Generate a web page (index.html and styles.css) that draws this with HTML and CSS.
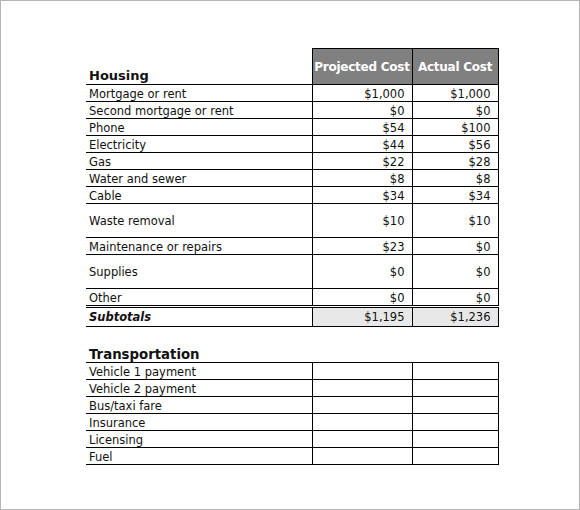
FILE: index.html
```html
<!DOCTYPE html>
<html lang="en">
  <head>
    <meta charset="UTF-8" />
    <title>Household Budget</title>
    <link rel="stylesheet" href="styles.css">
  </head>
  <body>
    <div class="sheet">
      <table class="budget">
        <colgroup>
          <col class="c-item" />
          <col class="c-cost" />
          <col class="c-actual" />
        </colgroup>
        <tr class="head">
          <td class="section">Housing</td>
          <th>Projected Cost</th>
          <th>Actual Cost</th>
        </tr>
        <tr><td>Mortgage or rent</td><td class="num">$1,000</td><td class="num">$1,000</td></tr>
        <tr><td>Second mortgage or rent</td><td class="num">$0</td><td class="num">$0</td></tr>
        <tr><td>Phone</td><td class="num">$54</td><td class="num">$100</td></tr>
        <tr><td>Electricity</td><td class="num">$44</td><td class="num">$56</td></tr>
        <tr><td>Gas</td><td class="num">$22</td><td class="num">$28</td></tr>
        <tr><td>Water and sewer</td><td class="num">$8</td><td class="num">$8</td></tr>
        <tr><td>Cable</td><td class="num">$34</td><td class="num">$34</td></tr>
        <tr class="tall"><td>Waste removal</td><td class="num">$10</td><td class="num">$10</td></tr>
        <tr><td>Maintenance or repairs</td><td class="num">$23</td><td class="num">$0</td></tr>
        <tr class="tall"><td>Supplies</td><td class="num">$0</td><td class="num">$0</td></tr>
        <tr class="last"><td>Other</td><td class="num">$0</td><td class="num">$0</td></tr>
        <tr class="total">
          <td>Subtotals</td>
          <td class="num">$1,195</td>
          <td class="num">$1,236</td>
        </tr>
      </table>

      <div class="section-title">Transportation</div>
      <table class="budget open">
        <colgroup>
          <col class="c-item" />
          <col class="c-cost" />
          <col class="c-actual" />
        </colgroup>
        <tr><td>Vehicle 1 payment</td><td></td><td></td></tr>
        <tr><td>Vehicle 2 payment</td><td></td><td></td></tr>
        <tr><td>Bus/taxi fare</td><td></td><td></td></tr>
        <tr><td>Insurance</td><td></td><td></td></tr>
        <tr><td>Licensing</td><td></td><td></td></tr>
        <tr><td>Fuel</td><td></td><td></td></tr>
      </table>
    </div>
  </body>
</html>
```

FILE: styles.css
```css
html, body {
  margin: 0;
  background: #fff;
}
.sheet {
  box-sizing: border-box;
  width: 580px;
  height: 510px;
  border: 1px solid #b4b4b4;
  padding: 47px 0 0 85px;
  font-family: "DejaVu Sans", Tahoma, sans-serif;
  font-size: 11.5px;
  color: #111;
}
.budget {
  border-collapse: collapse;
  table-layout: fixed;
  width: 412px;
}
.c-item {
  width: 226px;
}
.c-cost {
  width: 100px;
}
.c-actual {
  width: 86px;
}
.budget td,
.budget th {
  padding: 0 3px;
  height: 16px;
  line-height: 14px;
  vertical-align: bottom;
  border-bottom: 1px solid #000;
  white-space: nowrap;
  overflow: hidden;
}
.budget td + td {
  border-left: 1px solid #000;
  border-right: 1px solid #000;
}
.budget .num {
  text-align: right;
  padding-right: 7px;
}
.head th {
  height: 35px;
  background: #808080;
  color: #fff;
  font-weight: bold;
  font-size: 12px;
  letter-spacing: -0.25px;
  vertical-align: middle;
  border: 1px solid #000;
  padding: 0;
}
.head .section {
  font-size: 13px;
  font-weight: bold;
  vertical-align: bottom;
  padding-bottom: 1px;
}
.tall td {
  height: 33px;
  vertical-align: middle;
}
.last td {
  border-bottom: 3px double #000;
}
.total td {
  height: 18px;
  vertical-align: middle;
}
.total td:first-child {
  font-weight: bold;
  font-style: italic;
}
.total .num {
  background: #e8e8e8;
}
.section-title {
  margin: 20px 0 0 3px;
  font-size: 13.3px;
  font-weight: bold;
  line-height: 15px;
}
.open {
  border-top: 1px solid #000;
}
```
